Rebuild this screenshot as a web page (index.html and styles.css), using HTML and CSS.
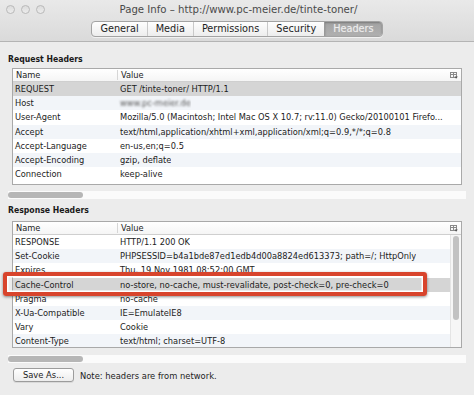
FILE: index.html
```html
<!DOCTYPE html>
<html>
<head>
<meta charset="utf-8">
<link rel="stylesheet" href="styles.css">
</head>
<body>
<div class="window">
  <div class="titlebar">
    <div class="titleline">
      <div class="lights"><span class="light"></span><span class="light"></span><span class="light"></span></div>
      <div class="title">Page Info – http://www.pc-meier.de/tinte-toner/</div>
    </div>
    <div class="tabs">
      <div class="tab">General</div>
      <div class="tab">Media</div>
      <div class="tab">Permissions</div>
      <div class="tab">Security</div>
      <div class="tab selected">Headers</div>
    </div>
  </div>

  <div class="content">
    <div class="section-title">Request Headers</div>
    <div class="table t1">
      <div class="head">
        <div class="name">Name</div>
        <div class="value">Value</div>
        <svg class="picker" width="8" height="7" viewBox="0 0 8 7"><rect x="0.5" y="0.5" width="6" height="5" fill="none" stroke="#8a8a8a"/><line x1="0.5" y1="2.5" x2="6.5" y2="2.5" stroke="#8a8a8a"/><line x1="3.5" y1="0.5" x2="3.5" y2="5.5" stroke="#8a8a8a"/><path d="M4.5 4.5 L7.8 4.5 L6.15 6.8 Z" fill="#555"/></svg>
      </div>
      <div class="row sel"><div class="name">REQUEST</div><div class="value">GET /tinte-toner/ HTTP/1.1</div></div>
      <div class="row alt"><div class="name">Host</div><div class="value"><span class="blurred">www.pc-meier.de</span></div></div>
      <div class="row"><div class="name">User-Agent</div><div class="value">Mozilla/5.0 (Macintosh; Intel Mac OS X 10.7; rv:11.0) Gecko/20100101 Firefo...</div></div>
      <div class="row alt"><div class="name">Accept</div><div class="value">text/html,application/xhtml+xml,application/xml;q=0.9,*/*;q=0.8</div></div>
      <div class="row"><div class="name">Accept-Language</div><div class="value">en-us,en;q=0.5</div></div>
      <div class="row alt"><div class="name">Accept-Encoding</div><div class="value">gzip, deflate</div></div>
      <div class="row"><div class="name">Connection</div><div class="value">keep-alive</div></div>
    </div>
    <div class="hscroll"><div class="thumb"></div></div>

    <div class="section-title s2">Response Headers</div>
    <div class="table t2">
      <div class="head">
        <div class="name">Name</div>
        <div class="value">Value</div>
        <svg class="picker" width="8" height="7" viewBox="0 0 8 7"><rect x="0.5" y="0.5" width="6" height="5" fill="none" stroke="#8a8a8a"/><line x1="0.5" y1="2.5" x2="6.5" y2="2.5" stroke="#8a8a8a"/><line x1="3.5" y1="0.5" x2="3.5" y2="5.5" stroke="#8a8a8a"/><path d="M4.5 4.5 L7.8 4.5 L6.15 6.8 Z" fill="#555"/></svg>
      </div>
      <div class="body">
        <div class="rows">
          <div class="row"><div class="name">RESPONSE</div><div class="value">HTTP/1.1 200 OK</div></div>
          <div class="row alt"><div class="name">Set-Cookie</div><div class="value">PHPSESSID=b4a1bde87ed1edb4d00a8824ed613373; path=/; HttpOnly</div></div>
          <div class="row"><div class="name">Expires</div><div class="value">Thu, 19 Nov 1981 08:52:00 GMT</div></div>
          <div class="row sel"><div class="name">Cache-Control</div><div class="value">no-store, no-cache, must-revalidate, post-check=0, pre-check=0</div></div>
          <div class="row"><div class="name">Pragma</div><div class="value">no-cache</div></div>
          <div class="row alt"><div class="name">X-Ua-Compatible</div><div class="value">IE=EmulateIE8</div></div>
          <div class="row"><div class="name">Vary</div><div class="value">Cookie</div></div>
          <div class="row alt"><div class="name">Content-Type</div><div class="value">text/html; charset=UTF-8</div></div>
        </div>
        <div class="vscroll"><div class="vthumb"></div></div>
      </div>
    </div>
    <div class="hscroll h2"><div class="thumb"></div></div>

    <div class="footer">
      <div class="button">Save As...</div>
      <div class="note">Note: headers are from network.</div>
    </div>
  </div>

  <div class="highlight"></div>
</div>
</body>
</html>
```

FILE: styles.css
```css
html, body {
  margin: 0;
  padding: 0;
}
body {
  width: 474px;
  height: 395px;
  overflow: hidden;
  background: #ececec;
  font-family: "DejaVu Sans Condensed", "DejaVu Sans", sans-serif;
  color: #1c1c1c;
}
.window {
  position: relative;
  width: 474px;
  height: 395px;
}
.titlebar {
  height: 41px;
  border-bottom: 1px solid #b4b4b4;
  background: linear-gradient(#e9e9e9, #dadada);
  display: flex;
  flex-direction: column;
  align-items: center;
}
.titleline {
  align-self: stretch;
  height: 18px;
  display: flex;
  align-items: center;
  position: relative;
}
.lights {
  display: flex;
  gap: 6px;
  padding-left: 6px;
  padding-top: 1px;
}
.light {
  border-radius: 50%;
  border: 1px solid #b9b9b9;
  background: linear-gradient(#dcdcdc, #ececec);
  box-sizing: border-box;
  width: 9px;
  height: 9px;
}
.title {
  flex: 1;
  text-align: center;
  font-size: 11.3px;
  color: #4a4a4a;
  margin-left: -42px;
  margin-top: 1px;
}
.tabs {
  margin-top: 3px;
  height: 16px;
  box-sizing: border-box;
  display: flex;
  border: 1px solid #a3a3a3;
  border-radius: 4px;
  background: linear-gradient(#fefefe, #ededed);
  overflow: hidden;
  box-shadow: 0 1px 0 rgba(255,255,255,0.6);
}
.tab {
  font-size: 10.8px;
  line-height: 14px;
  padding: 0 8px;
  color: #1e1e1e;
  border-left: 1px solid #c9c9c9;
}
.tab:first-child {
  border-left: none;
}
.tab.selected {
  background: linear-gradient(#a2a2a2, #b0b0b0);
  color: #ececec;
  border-left-color: #999;
  box-shadow: inset 0 1px 2px rgba(0,0,0,0.25);
  text-shadow: 0 0 1px rgba(255,255,255,0.4);
}
.content {
  padding: 0 8px;
}
.section-title {
  margin-top: 11px;
  height: 12px;
  line-height: 12px;
  font-size: 8.6px;
  font-weight: bold;
  color: #1a1a1a;
}
.section-title.s2 {
  margin-top: 5px;
}
.table {
  margin: 3px 0 0 4px;
  width: 450px;
  box-sizing: border-box;
  border: 1px solid #a9a9a9;
  background: #fff;
  overflow: hidden;
  font-size: 9.2px;
}
.t1 { height: 117px; }
.t2 {
  height: 127px;
  margin-top: 5px;
  display: flex;
  flex-direction: column;
}
.head {
  height: 13px;
  box-sizing: border-box;
  display: flex;
  align-items: center;
  border-bottom: 1px solid #cfcfcf;
  background: linear-gradient(#ffffff, #f5f5f5);
  position: relative;
  line-height: 12px;
}
.head .name {
  width: 105px;
  padding-left: 3px;
  box-sizing: border-box;
  border-right: 1px solid #d6d6d6;
  height: 10px;
  line-height: 10px;
}
.head .value {
  flex: 1;
  padding-left: 3px;
  height: 10px;
  line-height: 10px;
}
.picker {
  margin-right: 3px;
  margin-top: 1px;
}
.row {
  height: 14.2px;
  line-height: 14.2px;
  display: flex;
  white-space: nowrap;
}
.row.alt { background: #f2f5f9; }
.row.sel { background: #d5d5d5; }
.row .name {
  width: 105px;
  padding-left: 2px;
  box-sizing: border-box;
  flex: none;
}
.row .value {
  padding-left: 2px;
  overflow: hidden;
}
.blurred {
  display: inline-block;
  color: #5a5a5a;
  filter: blur(1.3px);
}
.body {
  flex: 1;
  display: flex;
  overflow: hidden;
}
.rows {
  flex: 1;
  overflow: hidden;
}
.vscroll {
  width: 11px;
  flex: none;
  background: #f6f6f6;
  border-left: 1px solid #e4e4e4;
  padding: 1px 2px 0 2px;
  box-sizing: border-box;
}
.vthumb {
  width: 6px;
  height: 84px;
  border-radius: 3px;
  background: #c2c2c2;
}
.hscroll {
  margin-top: 6px;
  width: 458px;
  height: 8px;
  background: #fbfbfb;
  padding: 1px 0;
  box-sizing: border-box;
}
.hscroll.h2 {
  margin-top: 7px;
}
.thumb {
  width: 75px;
  height: 6px;
  border-radius: 3px;
  background: #b6b6b6;
}
.footer {
  margin-top: 5px;
  display: flex;
  align-items: center;
  gap: 6px;
  padding-left: 5px;
}
.button {
  width: 61px;
  height: 14px;
  box-sizing: border-box;
  border: 1px solid #9c9c9c;
  border-radius: 3px;
  background: linear-gradient(#ffffff, #ededed);
  font-size: 9.3px;
  line-height: 12px;
  text-align: center;
  box-shadow: 0 1px 0 rgba(0,0,0,0.08);
}
.note {
  font-size: 9.3px;
  color: #1c1c1c;
}
.highlight {
  position: absolute;
  left: 3px;
  top: 272px;
  width: 424px;
  height: 24px;
  box-sizing: border-box;
  border: 4px solid #d8442c;
  border-radius: 3px;
  box-shadow: 0 1px 3px rgba(0,0,0,0.45), inset 0 0 0 1.5px #fff;
}
```
